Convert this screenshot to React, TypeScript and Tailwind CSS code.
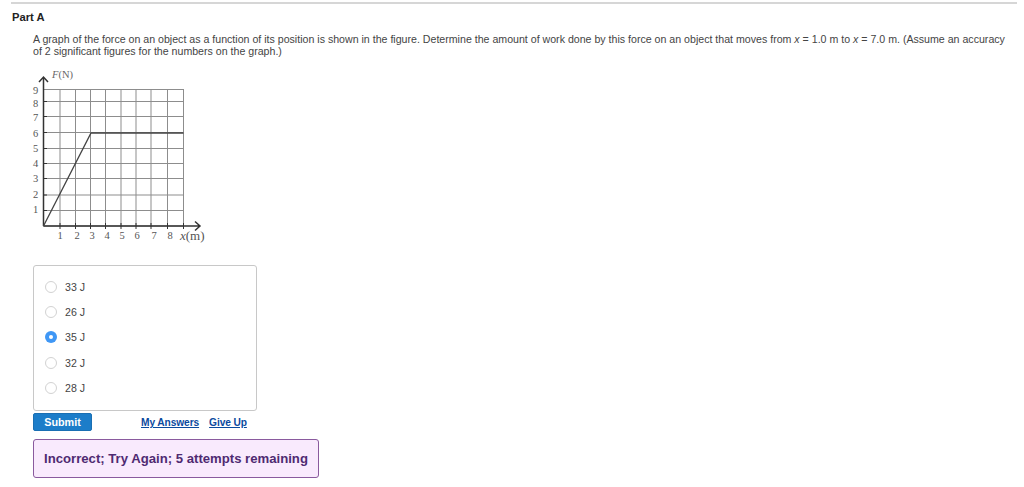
const font = "font-['Liberation_Sans',Arial,sans-serif]";

const answers = [
    { label: "33 J", checked: false },
    { label: "26 J", checked: false },
    { label: "35 J", checked: true },
    { label: "32 J", checked: false },
    { label: "28 J", checked: false },
];

const gridX = [60, 75.5, 90.5, 105.5, 121, 136, 151, 167.5];
const gridY = [101.5, 116.5, 132.5, 148.5, 163.5, 178.5, 195, 210.5];
const xLabels = [60, 77, 92, 107, 122, 137, 154, 170];
const yLabels = [
    { n: 9, y: 94 },
    { n: 8, y: 107 },
    { n: 7, y: 121 },
    { n: 6, y: 137 },
    { n: 5, y: 152 },
    { n: 4, y: 167 },
    { n: 3, y: 182 },
    { n: 2, y: 198 },
    { n: 1, y: 213 },
];

// coordinates are page pixels, viewBox starts where the svg sits
const ForceGraph = () => (
    <svg width="200" height="185" viewBox="20 65 200 185" className="block" fontFamily="'Liberation Serif', serif">
        <g stroke="#8d8d8d" strokeWidth="1" fill="none">
            <rect x="43.5" y="89.5" width="140" height="136.5" />
            {gridX.map((x) => (
                <line key={x} x1={x} y1="89.5" x2={x} y2="226" />
            ))}
            {gridY.map((y) => (
                <line key={y} x1="43.5" y1={y} x2="183.5" y2={y} />
            ))}
        </g>
        <g stroke="#333" strokeWidth="1" fill="none">
            <path d="M43.5 226V77M39 82l4.5-5 4.5 5" strokeWidth="1.5" />
            <path d="M43.5 226H199M195 221.5l5 4.5-5 4.5" strokeWidth="1.5" />
            <path d="M43.5 226L91 133H183.5" stroke="#444" strokeWidth="1.3" />
            {gridY.map((y) => (
                <line key={y} x1="43.5" y1={y} x2="47" y2={y} />
            ))}
            {[...gridX, 183.5].map((x) => (
                <line key={x} x1={x} y1="223" x2={x} y2="229" />
            ))}
        </g>
        <g fill="#555" fontSize="10.5" textAnchor="middle">
            {yLabels.map((l) => (
                <text key={l.n} x="35.5" y={l.y}>{l.n}</text>
            ))}
            {xLabels.map((x, i) => (
                <text key={x} x={x} y="239">{i + 1}</text>
            ))}
        </g>
        <text x="52" y="78" fontSize="10.5" fill="#666">
            <tspan fontStyle="italic">F</tspan>(N)
        </text>
        <text x="180" y="240" fontSize="13" fill="#555">
            <tspan fontStyle="italic">x</tspan>(m)
        </text>
    </svg>
);

const Radio = ({ checked }: { checked: boolean }) =>
    checked ? (
        <span className="flex justify-center items-center w-3 h-3 rounded-full bg-[#3f97f5]">
            <span className="w-1 h-1 rounded-full bg-white" />
        </span>
    ) : (
        <span className="w-3 h-3 rounded-full border border-[#d2d2d2] bg-white" />
    );

const App = () => {
    return (
        <div className={`${font} w-[1024px] h-[487px] overflow-hidden bg-white text-[#333] pt-[2px] px-[11px]`}>
            <div className="w-[1006px] h-[2px] bg-[#d6d6d6]" />
            <h2 className="mt-[7px] ml-[1px] text-[11.2px] leading-[13px] font-bold text-[#222]">Part A</h2>

            <div className="ml-[22px]">
                <p className="mt-[9px] whitespace-nowrap text-[10.62px] leading-[12px] text-[#444]">
                    A graph of the force on an object as a function of its position is shown in the figure. Determine
                    the amount of work done by this force on an object that moves from <i>x</i> = 1.0 m to <i>x</i> = 7.0
                    m. (Assume an accuracy
                    <br />
                    of 2 significant figures for the numbers on the graph.)
                </p>

                <div className="-ml-[13px] mt-[8px]">
                    <ForceGraph />
                </div>

                <div className="mt-[15px] flex flex-col gap-[13.2px] w-[224px] h-[146px] pt-[15px] pl-[11px] border border-[#c8c8c8] rounded-[3px]">
                    {answers.map((a) => (
                        <label key={a.label} className="flex items-center gap-[8px] h-[12px] text-[10.6px] text-[#444]">
                            <Radio checked={a.checked} />
                            <span className="relative top-[1px]">{a.label}</span>
                        </label>
                    ))}
                </div>

                <div className="flex items-center mt-[2px] h-[18px]">
                    <button className="w-[59px] h-[18px] rounded-[2px] bg-[#1c7dc9] border border-[#1a6fb3] text-white text-[10.8px] font-bold">
                        Submit
                    </button>
                    <a className="ml-[49px] mt-[1px] text-[10.2px] tracking-[-0.1px] font-bold text-[#0b4a9e] underline">My Answers</a>
                    <a className="ml-[10px] mt-[1px] text-[10.2px] tracking-[-0.1px] font-bold text-[#0b4a9e] underline">Give Up</a>
                </div>

                <div className="flex items-center justify-center mt-[8px] w-[286px] h-[39px] rounded-[3px] border border-[#8a5a9e] bg-[#f9eafd] text-[13.15px] font-bold text-[#4f2a72]">
                    Incorrect; Try Again; 5 attempts remaining
                </div>
            </div>
        </div>
    );
};

export default App;
